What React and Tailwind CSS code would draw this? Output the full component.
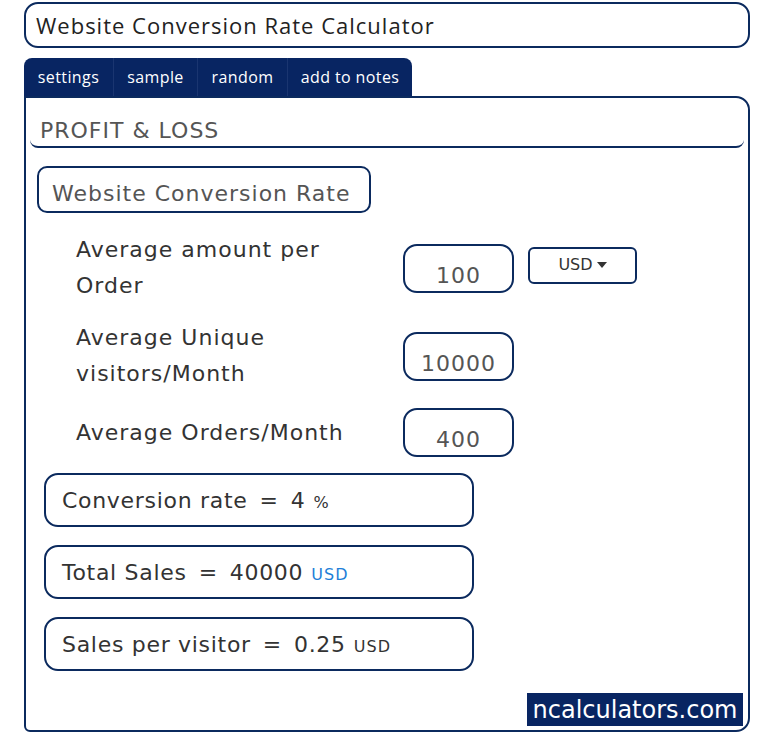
import React from 'react';

const navy = 'border-[#0b2a5e]';

const InputRow = ({ label, value, extra }) => (
  <div className="flex items-center">
    <div className="w-[377px] pl-[50px] text-[22px] leading-[36px] tracking-[1px] text-[#333]">{label}</div>
    <div className={`w-[111px] h-[49px] border-2 ${navy} rounded-[14px] flex items-end justify-center pb-0 leading-[30px] tracking-[1px] text-[22px] text-[#555]`}>
      {value}
    </div>
    {extra}
  </div>
);

const Result = ({ label, value, unit, unitClass }) => (
  <div className={`ml-[18px] w-[430px] h-[54px] border-2 ${navy} rounded-[14px] flex items-center pl-[16px] text-[22px] tracking-[0.7px] text-[#333]`}>
    <div className="flex items-baseline">
      <span>{label}</span>
      <span className="ml-[12px]">=</span>
      <span className="ml-[12px]">{value}</span>
      <span className={`ml-[8px] text-[16px] tracking-[1px] ${unitClass}`}>{unit}</span>
    </div>
  </div>
);

export default function App() {
  return (
    <div className="w-[770px] h-[733px] bg-white pl-[24px] pr-[20px] pt-[2px] overflow-hidden" style={{ fontFamily: '"DejaVu Sans", sans-serif' }}>
      <div className={`h-[46px] border-2 ${navy} rounded-[14px] flex items-center pl-[10px] text-[22px] tracking-[1px] text-[#222]`} style={{ fontFamily: '"Open Sans", sans-serif' }}>
        Website Conversion Rate Calculator
      </div>
      <div className="mt-[10px] flex">
        <div className="flex bg-[#082562] rounded-t-[8px] h-[38px] text-white text-[16px] tracking-[0.4px]" style={{ fontFamily: '"Open Sans", sans-serif' }}>
          <div className="w-[89px] flex items-center justify-center">settings</div>
          <div className="w-[84px] flex items-center justify-center border-l border-[#1a3570]">sample</div>
          <div className="w-[90px] flex items-center justify-center border-l border-[#1a3570]">random</div>
          <div className="w-[125px] flex items-center justify-center border-l border-[#1a3570]">add to notes</div>
        </div>
      </div>
      <div className={`h-[636px] border-2 ${navy} rounded-tr-[14px] rounded-br-[14px] rounded-bl-[6px] flex flex-col`}>
        <div className={`mx-[4px] mt-[16px] h-[34px] border-b-2 ${navy} rounded-b-[8px] pl-[10px] text-[22px] tracking-[1px] text-[#555] leading-[34px]`}>
          PROFIT &amp; LOSS
        </div>
        <div className={`ml-[11px] mt-[18px] w-[334px] h-[47px] border-2 ${navy} rounded-[10px] flex items-end pl-[13px] pb-0 leading-[34px] text-[22px] tracking-[1px] text-[#555]`}>
          Website Conversion Rate
        </div>
        <div className="mt-[19px] flex flex-col gap-[16px]">
          <InputRow
            label={<>Average amount per<br />Order</>}
            value="100"
            extra={
              <div className={`ml-[14px] w-[109px] h-[37px] border-2 ${navy} rounded-[6px] flex items-center justify-center text-[16px] text-[#333] -mt-[6px]`}>
                USD
                <svg width="10" height="6" viewBox="0 0 10 6" className="ml-[4px]"><path d="M0 0h10L5 6z" fill="#333" /></svg>
              </div>
            }
          />
          <InputRow label={<>Average Unique<br />visitors/Month</>} value="10000" />
          <InputRow label="Average Orders/Month" value="400" />
        </div>
        <div className="mt-[16px] flex flex-col gap-[18px]">
          <Result label="Conversion rate" value="4" unit="%" unitClass="text-[#333]" />
          <Result label="Total Sales" value="40000" unit="USD" unitClass="text-[#1e7fd8]" />
          <Result label="Sales per visitor" value="0.25" unit="USD" unitClass="text-[#333]" />
        </div>
        <div className="flex-1" />
        <div className="flex justify-end pr-[5px] pb-[4px]">
          <div className="bg-[#082562] text-white text-[24px] h-[33px] w-[216px] flex items-center justify-center">
            ncalculators.com
          </div>
        </div>
      </div>
    </div>
  );
}
